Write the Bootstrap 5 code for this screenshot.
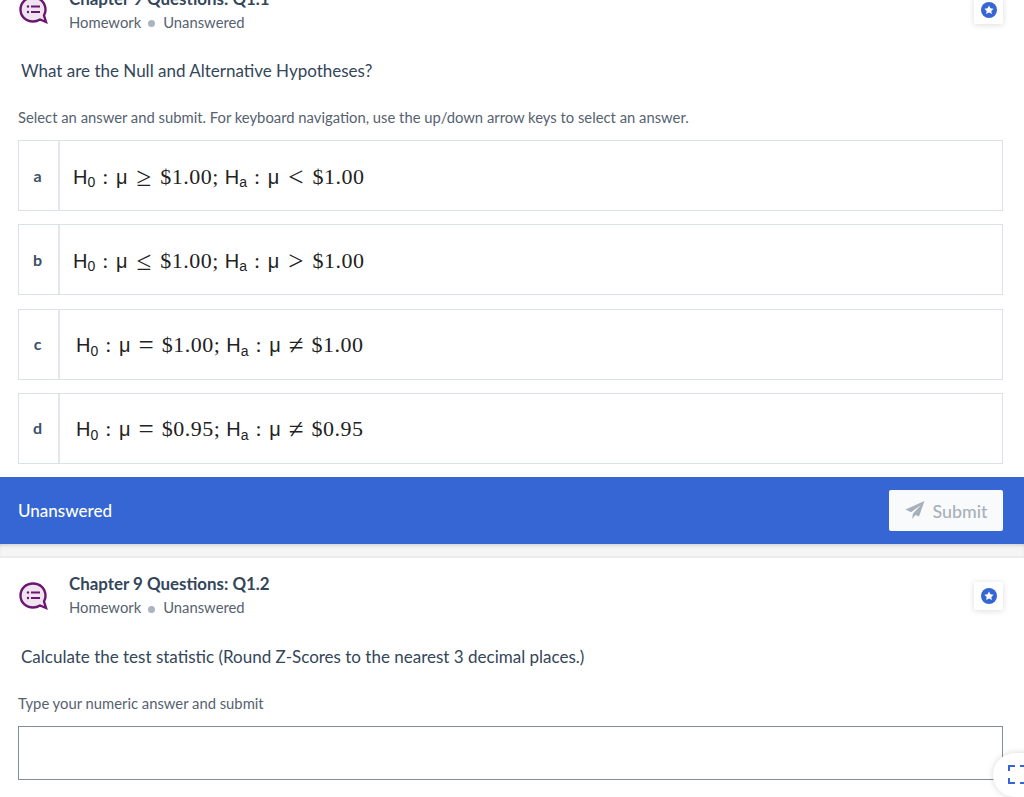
<!DOCTYPE html>
<html lang="en">
<head>
    <meta charset="UTF-8">
    <title>Chapter 9 Questions</title>
    <link href="https://cdn.jsdelivr.net/npm/bootstrap@5.3.0/dist/css/bootstrap.min.css" rel="stylesheet">
    <style>
        html, body { height: 797px; overflow: hidden; }
        body { font-family: "Lato", "Liberation Sans", sans-serif; color: #33465a; background: #fff; }

        /* page is scrolled a bit in the picture, first header is cut off */
        .scroll-wrap { margin-top: -12px; }

        .q-head { padding: 0 21px 0 18px; gap: 21px; height: 44px; }
        .q-icon { width: 30px; height: 30px; flex: none; }
        .q-title { font-size: 16.9px; font-weight: 700; line-height: 24px; color: #33465a; }
        .q-meta { font-size: 14.8px; line-height: 23px; color: #56626f; }
        .q-dot { display: inline-block; width: 7px; height: 7px; border-radius: 50%; background: #a9b4bf; margin: 0 8px 1px 7px; vertical-align: middle; }
        .flag-btn { width: 29px; height: 28px; background: #fff; box-shadow: 0 1px 6px rgba(0,0,0,.14); border-radius: 2px; }

        .q-text { font-size: 17px; line-height: 24px; color: #33465a; padding-left: 21px; margin-top: 27px; }
        .q-hint { font-size: 14.8px; line-height: 20px; color: #56626f; padding-left: 18px; margin-top: 24px; }

        .opt-list { padding: 0 21px 0 18px; gap: 13.3px; margin-top: 13px; }
        .opt-row { height: 71px; border: 1px solid #dce0e8; }
        .opt-key { width: 41px; flex: none; border-right: 2px solid #e3e6ec; font-weight: 700; font-size: 16px; color: #3c5068; padding-right: 2px; }
        .opt-math { font-size: 22px; letter-spacing: .5px; color: #222; white-space: nowrap; font-family: "Liberation Serif", serif; padding: 1px 0 0 13px; }
        .opt-math.pad-wide { padding-left: 16px; }
        .opt-math .sf { font-family: "Liberation Sans", sans-serif; font-size: 20px; letter-spacing: 0; }
        .opt-math sub { font-family: "Liberation Sans", sans-serif; font-size: 14px; bottom: -.25em; }
        .opt-math .rel { margin: 0 7px; }
        .opt-math .sym { font-size: 27px; line-height: 1; letter-spacing: 0; margin: 0 8px; vertical-align: -2px; }
        .opt-math .sym-wide { margin: 0 9px; }

        .submit-bar { height: 67px; background: #3566d3; padding: 0 21px 0 18px; margin-top: 13px; color: #fff; font-size: 17px; font-weight: 500; }
        .submit-bar > span { padding-top: 1px; }
        .submit-btn { width: 114px; height: 41px; background: #f9fafb; color: #a7b0ba; font-size: 17.8px; border-radius: 2px; gap: 8px; }
        .submit-btn span { padding-top: 2px; }
        .bar-gap { height: 14px; background: #f5f5f5; box-shadow: inset 0 3px 4px -2px rgba(0,0,0,.18); border-bottom: 2px solid #ececec; }

        .num-input { height: 54px; border: 1px solid #808e9b; border-radius: 0; margin: 13px 21px 0 18px; width: 985px; }
        .full-btn { position: absolute; left: 993px; top: 753px; width: 60px; height: 44px; border-radius: 22px; background: #fff; box-shadow: 0 0 6px rgba(0,0,0,.16); }
    </style>
</head>
<body>
    <div class="scroll-wrap">
        <!-- Question 1 -->
        <div class="d-flex align-items-center q-head">
            <svg class="q-icon" viewBox="0 0 30 30">
                <path d="M15 2.500C8 2.500 2.500 7.500 2.500 14.500S8 26.500 15 26.500c2.600 0 5-.7 7-2l6 2.500-2-6.500c1-1.800 1.500-3.700 1.500-5.500C27.500 7.500 22 2.500 15 2.500z" fill="#efe4ef" stroke="#6b1670" stroke-width="2.400"/>
                <circle cx="10" cy="11.500" r="1.200" fill="#6b1670"/><circle cx="10" cy="17" r="1.200" fill="#6b1670"/>
                <rect x="13" y="10.500" width="9" height="2" fill="#6b1670"/><rect x="13" y="16" width="9" height="2" fill="#6b1670"/>
            </svg>
            <div class="flex-grow-1">
                <div class="q-title">Chapter 9 Questions: Q1.1</div>
                <div class="q-meta">Homework<span class="q-dot"></span>Unanswered</div>
            </div>
            <div class="flag-btn d-flex align-items-center justify-content-center">
                <svg width="16" height="16" viewBox="0 0 16 16"><circle cx="8" cy="8" r="8" fill="#3566d3"/><path d="M8 3.400l1.400 2.900 3.200.4-2.300 2.200.6 3.100L8 10.500l-2.900 1.500.6-3.100-2.300-2.200 3.200-.4z" fill="#fff"/></svg>
            </div>
        </div>

        <div class="q-text">What are the Null and Alternative Hypotheses?</div>
        <div class="q-hint">Select an answer and submit. For keyboard navigation, use the up/down arrow keys to select an answer.</div>

        <div class="d-flex flex-column opt-list">
            <div class="d-flex opt-row">
                <div class="opt-key d-flex align-items-center justify-content-center">a</div>
                <div class="opt-math d-flex align-items-center"><span><span class="sf">H<sub>0</sub></span><span class="rel">:</span><span class="sf">μ</span><span class="sym sym-wide">≥</span>$1.00; <span class="sf">H<sub>a</sub></span><span class="rel">:</span><span class="sf">μ</span><span class="sym sym-wide">&lt;</span>$1.00</span></div>
            </div>
            <div class="d-flex opt-row">
                <div class="opt-key d-flex align-items-center justify-content-center">b</div>
                <div class="opt-math d-flex align-items-center"><span><span class="sf">H<sub>0</sub></span><span class="rel">:</span><span class="sf">μ</span><span class="sym sym-wide">≤</span>$1.00; <span class="sf">H<sub>a</sub></span><span class="rel">:</span><span class="sf">μ</span><span class="sym sym-wide">&gt;</span>$1.00</span></div>
            </div>
            <div class="d-flex opt-row">
                <div class="opt-key d-flex align-items-center justify-content-center">c</div>
                <div class="opt-math pad-wide d-flex align-items-center"><span><span class="sf">H<sub>0</sub></span><span class="rel">:</span><span class="sf">μ</span><span class="sym">=</span>$1.00; <span class="sf">H<sub>a</sub></span><span class="rel">:</span><span class="sf">μ</span><span class="sym">≠</span>$1.00</span></div>
            </div>
            <div class="d-flex opt-row">
                <div class="opt-key d-flex align-items-center justify-content-center">d</div>
                <div class="opt-math pad-wide d-flex align-items-center"><span><span class="sf">H<sub>0</sub></span><span class="rel">:</span><span class="sf">μ</span><span class="sym">=</span>$0.95; <span class="sf">H<sub>a</sub></span><span class="rel">:</span><span class="sf">μ</span><span class="sym">≠</span>$0.95</span></div>
            </div>
        </div>

        <div class="submit-bar d-flex align-items-center justify-content-between">
            <span>Unanswered</span>
            <div class="submit-btn d-flex align-items-center justify-content-center">
                <svg width="20" height="20" viewBox="0 0 20 20"><path d="M19.500 1L.5 9.500l5.500 2.700L16 5 8 13.500 7 19l3.500-4 3.500 1.500z" fill="#a7b0ba"/></svg>
                <span>Submit</span>
            </div>
        </div>
        <div class="bar-gap"></div>

        <!-- Question 2 -->
        <div class="d-flex align-items-center q-head" style="margin-top:16px">
            <svg class="q-icon" viewBox="0 0 30 30">
                <path d="M15 2.500C8 2.500 2.500 7.500 2.500 14.500S8 26.500 15 26.500c2.600 0 5-.7 7-2l6 2.500-2-6.500c1-1.800 1.500-3.700 1.500-5.500C27.500 7.500 22 2.500 15 2.500z" fill="#efe4ef" stroke="#6b1670" stroke-width="2.400"/>
                <circle cx="10" cy="11.500" r="1.200" fill="#6b1670"/><circle cx="10" cy="17" r="1.200" fill="#6b1670"/>
                <rect x="13" y="10.500" width="9" height="2" fill="#6b1670"/><rect x="13" y="16" width="9" height="2" fill="#6b1670"/>
            </svg>
            <div class="flex-grow-1">
                <div class="q-title">Chapter 9 Questions: Q1.2</div>
                <div class="q-meta">Homework<span class="q-dot"></span>Unanswered</div>
            </div>
            <div class="flag-btn d-flex align-items-center justify-content-center">
                <svg width="16" height="16" viewBox="0 0 16 16"><circle cx="8" cy="8" r="8" fill="#3566d3"/><path d="M8 3.400l1.400 2.900 3.200.4-2.300 2.200.6 3.100L8 10.500l-2.900 1.500.6-3.100-2.300-2.200 3.200-.4z" fill="#fff"/></svg>
            </div>
        </div>

        <div class="q-text">Calculate the test statistic (Round Z-Scores to the nearest 3 decimal places.)</div>
        <div class="q-hint">Type your numeric answer and submit</div>
        <input type="text" class="form-control num-input" aria-label="answer">
    </div>

    <div class="full-btn d-flex align-items-center">
        <svg width="20" height="19" viewBox="0 0 20 19" style="margin-left:15px;margin-top:-1px"><path d="M1 6V1h6M1 13v5h6M12 1h6M12 18h6" fill="none" stroke="#3566d3" stroke-width="2"/></svg>
    </div>
</body>
</html>
